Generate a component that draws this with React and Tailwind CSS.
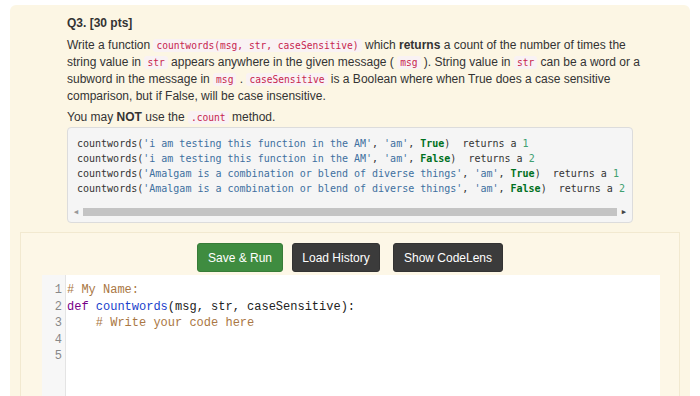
import React from 'react';

const prose = { fontFamily: '"Liberation Sans", Arial, sans-serif' };
const mono = { fontFamily: '"DejaVu Sans Mono", Consolas, monospace' };
const courier = { fontFamily: '"Liberation Mono", "Courier New", monospace' };

function Code({ children }) {
  return (
    <code
      className="text-[9.6px] leading-none text-[#c7254e] bg-[#f9f2f4] rounded-[3px] px-[3px] py-[1px]"
      style={mono}
    >
      {children}
    </code>
  );
}

const examples = [
  { msg: 'i am testing this function in the AM', flag: 'True', ret: '1' },
  { msg: 'i am testing this function in the AM', flag: 'False', ret: '2' },
  { msg: 'Amalgam is a combination or blend of diverse things', flag: 'True', ret: '1' },
  { msg: 'Amalgam is a combination or blend of diverse things', flag: 'False', ret: '2' },
];

function ExampleLine({ ex }) {
  return (
    <div className="whitespace-pre">
      <span className="text-[#333]">countwords(</span>
      <span className="text-[#4070a0]">'{ex.msg}'</span>
      <span className="text-[#333]">, </span>
      <span className="text-[#4070a0]">'am'</span>
      <span className="text-[#333]">, </span>
      <span className="text-[#007020] font-bold">{ex.flag}</span>
      <span className="text-[#333]">)  returns a </span>
      <span className="text-[#40a070]">{ex.ret}</span>
    </div>
  );
}

function Editor() {
  const lines = [
    <span className="text-[#aa7744]"># My Name:</span>,
    <>
      <span className="text-[#770088]">def</span>{' '}
      <span className="text-[#1a3fcc]">countwords</span>
      <span className="text-[#222]">(msg, str, caseSensitive):</span>
    </>,
    <span className="text-[#aa7744]">{'    # Write your code here'}</span>,
    '',
    '',
  ];
  return (
    <div className="ml-[21px] mr-[19px] mt-[3px] h-[130px] bg-white flex text-[12px] leading-[16.5px]" style={courier}>
      <div className="w-[24px] bg-[#f7f7f7] border-r border-[#e4e4e4] pt-[7px] pr-[3px] text-right text-[#888]">
        {lines.map((_, i) => (
          <div key={i}>{i + 1}</div>
        ))}
      </div>
      <div className="pt-[7px] pl-[1px]">
        {lines.map((l, i) => (
          <div key={i} className="whitespace-pre h-[16.5px]">{l}</div>
        ))}
      </div>
    </div>
  );
}

export default function App() {
  return (
    <div className="w-[700px] h-[396px] bg-white overflow-hidden pt-[5px]">
      <div className="ml-[10px] w-[680px] h-[420px] bg-[#fcf6e4] rounded-t-[6px] px-[10px] pt-[10px]" style={prose}>
        <div className="px-[47px] text-[12px] text-[#333]">
          <div className="font-bold leading-[17px]">Q3. [30 pts]</div>
          <div className="mt-[5px] leading-[17px] whitespace-nowrap">
            Write a function <Code>countwords(msg, str, caseSensitive)</Code> which <b>returns</b> a count of the number of times the
            <br />
            string value in <Code>str</Code> appears anywhere in the given message ( <Code>msg</Code> ). String value in <Code>str</Code> can be a word or a
            <br />
            subword in the message in <Code>msg</Code> . <Code>caseSensitive</Code> is a Boolean where when True does a case sensitive
            <br />
            comparison, but if False, will be case insensitive.
          </div>
          <div className="mt-[4px] leading-[17px]">
            You may <b>NOT</b> use the <Code>.count</Code> method.
          </div>
          <div className="mt-[1px] h-[96px] bg-[#f5f5f5] border border-[#dcdcdc] rounded-[4px] pt-[8px] px-[9px] text-[10px] leading-[15px]" style={mono}>
            {examples.map((ex, i) => (
              <ExampleLine key={i} ex={ex} />
            ))}
            <div className="mt-[12px] h-[8px] flex items-center -mx-[3px]">
              <span className="text-[7px] text-[#999] w-[9px] leading-none">&#9664;</span>
              <div className="flex-1 h-[8px] bg-[#c4c4c4]" />
              <span className="text-[7px] text-[#444] w-[9px] text-right leading-none">&#9654;</span>
            </div>
          </div>
        </div>

        <div className="mt-[9px] h-[200px] border border-[#f2e9d0] bg-[#fdf7e7]">
          <div className="pt-[10px] flex justify-center text-[12px] text-white">
            <button className="w-[86px] h-[29px] rounded-[3px] bg-[#3f8c40] border border-[#387c38]">Save &amp; Run</button>
            <button className="ml-[9px] w-[88px] h-[29px] rounded-[3px] bg-[#3b3b3b] border border-[#333]">Load History</button>
            <button className="ml-[13px] w-[110px] h-[29px] rounded-[3px] bg-[#3b3b3b] border border-[#333]">Show CodeLens</button>
          </div>
          <Editor />
        </div>
      </div>
    </div>
  );
}
